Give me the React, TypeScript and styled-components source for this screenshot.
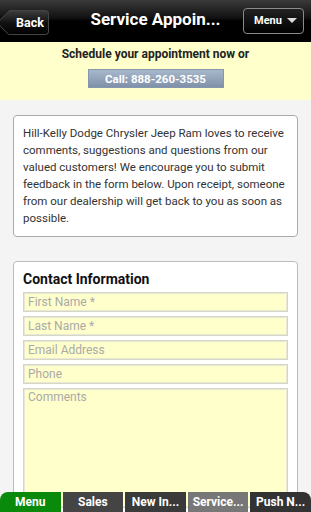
import styled, { createGlobalStyle } from 'styled-components';

const GlobalStyle = createGlobalStyle`
  html, body {
    margin: 0;
    padding: 0;
    background: #f4f4f4;
    font-family: Roboto, "Liberation Sans", sans-serif;
  }
  * { box-sizing: border-box; }
`;

const Page = styled.div`
  width: 311px;
  height: 512px;
  overflow: hidden;
  position: relative;
  background: #f4f4f4;
`;

const Header = styled.header`
  height: 42px;
  background: linear-gradient(#3a3a3a 0px, #111 18px, #000 21px, #000 42px);
  display: flex;
  align-items: center;
  justify-content: space-between;
  padding: 0 7px 0 6px;
  position: relative;
`;

const BackButton = styled.div`
  position: relative;
  height: 25px;
  width: 40px;
  margin-top: 2px;
  margin-left: 3px;
  padding-left: 7px;
  display: flex;
  align-items: center;
  color: #fff;
  font-weight: bold;
  font-size: 12.5px;
  background: linear-gradient(#3c3c3c, #111 50%, #000);
  border: 1px solid #444;
  border-left: none;
  border-radius: 0 4px 4px 0;
  &::before {
    content: '';
    position: absolute;
    left: -9px;
    top: 3px;
    width: 17px;
    height: 17px;
    transform: rotate(45deg);
    background: linear-gradient(135deg, #3c3c3c, #111 50%, #000);
    border-left: 1px solid #444;
    border-bottom: 1px solid #444;
    border-radius: 0 0 0 3px;
  }
  span {
    position: relative;
  }
`;

const Title = styled.h1`
  margin: 0;
  color: #fff;
  font-size: 17px;
  font-weight: bold;
  position: absolute;
  left: 0;
  right: 0;
  top: 9px;
  text-align: center;
  pointer-events: none;
`;

const MenuButton = styled.div`
  width: 61px;
  height: 26px;
  border: 1px solid #8a8a8a;
  border-radius: 4px;
  background: linear-gradient(#222, #000);
  color: #fff;
  font-size: 11px;
  font-weight: bold;
  display: flex;
  align-items: center;
  justify-content: space-between;
  padding: 0 6px 0 10px;
  margin-top: -1px;
`;

const Caret = styled.span`
  width: 0;
  height: 0;
  border-left: 5px solid transparent;
  border-right: 5px solid transparent;
  border-top: 5px solid #ddd;
`;

const Promo = styled.section`
  background: #ffffcc;
  height: 58px;
  display: flex;
  flex-direction: column;
  align-items: center;
  padding-top: 5px;
`;

const PromoText = styled.div`
  font-size: 12px;
  font-weight: bold;
  color: #222;
`;

const CallButton = styled.div`
  margin-top: 8px;
  width: 136px;
  height: 19px;
  background: linear-gradient(#a9b8cb, #7f91a9);
  border: 1px solid #8697ad;
  color: #fff;
  font-size: 11.5px;
  font-weight: bold;
  display: flex;
  align-items: center;
  justify-content: center;
`;

const Content = styled.main`
  padding: 15px 13px 0;
  display: flex;
  flex-direction: column;
  gap: 24px;
`;

const Card = styled.div`
  background: #fff;
  border: 1px solid #aaa;
  border-radius: 4px;
  padding: 9px 9px;
`;

const Intro = styled.p`
  margin: 0;
  font-size: 11.5px;
  line-height: 17px;
  color: #333;
`;

const FormCard = styled(Card)`
  border-color: #bbb;
  padding-bottom: 40px;
`;

const FormTitle = styled.h2`
  margin: 0 0 5px;
  font-size: 14px;
  font-weight: bold;
  color: #111;
  line-height: 16px;
`;

const Field = styled.input`
  display: block;
  width: 100%;
  height: 20px;
  margin: 0 0 4px;
  border: 1px solid #d6d6c6;
  box-shadow: inset 0 0 0 1px #e8e8d8;
  background: #ffffcc;
  font-family: inherit;
  font-size: 12px;
  padding: 0 4px;
  &::placeholder {
    color: #aaa;
  }
`;

const Comments = styled.textarea`
  display: block;
  width: 100%;
  height: 120px;
  border: 1px solid #d6d6c6;
  box-shadow: inset 0 0 0 1px #e8e8d8;
  background: #ffffcc;
  font-family: inherit;
  font-size: 12px;
  padding: 1px 4px;
  resize: none;
  &::placeholder {
    color: #aaa;
  }
`;

const TabBar = styled.nav`
  position: absolute;
  left: 0;
  right: 0;
  bottom: 0;
  height: 20px;
  display: flex;
  gap: 2px;
  background: transparent;
`;

const Tab = styled.div<{ $bg: string; $round?: 'left' | 'right' }>`
  flex: 1;
  background: ${(p) => p.$bg};
  color: #fff;
  font-size: 12px;
  font-weight: bold;
  display: flex;
  align-items: center;
  justify-content: center;
  border-radius: ${(p) =>
    p.$round === 'left' ? '8px 0 0 0' : p.$round === 'right' ? '0 8px 0 0' : '0'};
`;

const tabs = [
  { label: 'Menu', bg: '#0a8a0a', round: 'left' as const },
  { label: 'Sales', bg: '#444' },
  { label: 'New In...', bg: '#3a3a3a' },
  { label: 'Service...', bg: '#777' },
  { label: 'Push N...', bg: '#333', round: 'right' as const },
];

const App = () => {
  return (
    <Page>
      <GlobalStyle />
      <Header>
        <BackButton>
          <span>Back</span>
        </BackButton>
        <Title>Service Appoin...</Title>
        <MenuButton>
          Menu
          <Caret />
        </MenuButton>
      </Header>
      <Promo>
        <PromoText>Schedule your appointment now or</PromoText>
        <CallButton>Call: 888-260-3535</CallButton>
      </Promo>
      <Content>
        <Card>
          <Intro>
            Hill-Kelly Dodge Chrysler Jeep Ram loves to receive comments, suggestions and
            questions from our valued customers! We encourage you to submit feedback in the
            form below. Upon receipt, someone from our dealership will get back to you as soon
            as possible.
          </Intro>
        </Card>
        <FormCard>
          <FormTitle>Contact Information</FormTitle>
          <Field placeholder="First Name *" />
          <Field placeholder="Last Name *" />
          <Field placeholder="Email Address" />
          <Field placeholder="Phone" />
          <Comments placeholder="Comments" />
        </FormCard>
      </Content>
      <TabBar>
        {tabs.map((t) => (
          <Tab key={t.label} $bg={t.bg} $round={t.round}>
            {t.label}
          </Tab>
        ))}
      </TabBar>
    </Page>
  );
};

export default App;
